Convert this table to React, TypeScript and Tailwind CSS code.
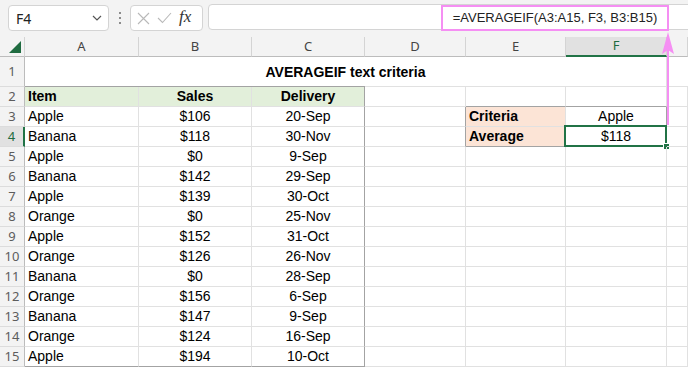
import React from 'react'

const rows: [string, string, string][] = [
  ['Apple', '$106', '20-Sep'],
  ['Banana', '$118', '30-Nov'],
  ['Apple', '$0', '9-Sep'],
  ['Banana', '$142', '29-Sep'],
  ['Apple', '$139', '30-Oct'],
  ['Orange', '$0', '25-Nov'],
  ['Apple', '$152', '31-Oct'],
  ['Orange', '$126', '26-Nov'],
  ['Banana', '$0', '28-Sep'],
  ['Orange', '$156', '6-Sep'],
  ['Banana', '$147', '9-Sep'],
  ['Orange', '$124', '16-Sep'],
  ['Apple', '$194', '10-Oct'],
]

const colWidths = ['w-[114px]', 'w-[113px]', 'w-[113px]', 'w-[101px]', 'w-[100px]', 'w-[101px]', 'flex-1']
const letters = ['A', 'B', 'C', 'D', 'E', 'F', '']

function darkRight(r: number, c: number) {
  return (c === 2 && r >= 2) || ((c === 3 || c === 5) && (r === 3 || r === 4))
}

function darkBottom(r: number, c: number) {
  return (r === 15 && c <= 2) || ((r === 2 || r === 4) && (c === 4 || c === 5))
}

function RowHeader({ n }: { n: number }) {
  const selected = n === 4
  return (
    <div
      className={`w-[25px] shrink-0 flex items-center justify-center border-b border-b-[#dcdcdc] font-['Noto_Sans',sans-serif] text-[13px] ${
        selected
          ? 'bg-[#e1e1e1] border-r-2 border-r-[#217346] text-[#1d6b3f]'
          : 'bg-[#f3f3f3] border-r border-r-[#bcbcbc] text-[#5c5c5c]'
      }`}
    >
      {n}
    </div>
  )
}

function Cell({
  r,
  c,
  children,
  className = '',
}: {
  r: number
  c: number
  children?: React.ReactNode
  className?: string
}) {
  const right = darkRight(r, c) ? 'border-r-[#a3a3a3]' : 'border-r-[#e1e1e1]'
  const bottom = darkBottom(r, c) ? 'border-b-[#a3a3a3]' : 'border-b-[#e1e1e1]'
  return (
    <div className={`${colWidths[c]} shrink-0 relative flex items-center border-r border-b ${right} ${bottom} ${className}`}>
      {children}
    </div>
  )
}

function FormulaBar() {
  return (
    <div className="h-[37px] bg-[#f3f3f3] flex items-start pt-[5px] pl-[8px] gap-[5px] overflow-hidden">
      {/* name box */}
      <div className="w-[101px] h-[26px] shrink-0 bg-white border border-[#d4d4d4] rounded-[4px] flex items-center justify-between pl-[7px] pr-[6px] font-['Noto_Sans',sans-serif] text-[14px] text-[#222]">
        <span>F4</span>
        <svg width="10" height="6" viewBox="0 0 10 6">
          <path d="M1 1 L5 5 L9 1" fill="none" stroke="#555" strokeWidth="1.2" />
        </svg>
      </div>
      <div className="w-[11px] h-[26px] shrink-0 flex flex-col items-center justify-center gap-[3px]">
        <span className="w-[2px] h-[2px] bg-[#8c8c8c]" />
        <span className="w-[2px] h-[2px] bg-[#8c8c8c]" />
        <span className="w-[2px] h-[2px] bg-[#8c8c8c]" />
      </div>
      {/* cancel / enter / insert function */}
      <div className="w-[73px] h-[26px] shrink-0 bg-white border border-[#d4d4d4] rounded-[4px] flex items-center pl-[6px] gap-[7px]">
        <svg width="13" height="13" viewBox="0 0 13 13">
          <path d="M1 1 L12 12 M12 1 L1 12" stroke="#b9b9b9" strokeWidth="1.1" />
        </svg>
        <svg width="15" height="12" viewBox="0 0 15 12">
          <path d="M1 6 L5.5 10.5 L14 1" fill="none" stroke="#b9b9b9" strokeWidth="1.1" />
        </svg>
        <span className="font-['Liberation_Serif',serif] italic text-[17px] text-[#333] leading-none -mt-[3px]">fx</span>
      </div>
      <div className="w-[492px] h-[26px] shrink-0 bg-white border border-[#d4d4d4] rounded-[4px] flex items-start justify-end pr-[30px] -mt-[1px]">
        <div className="w-[228px] h-[26px] border-2 border-[#f58ff3] flex items-center justify-center font-['Liberation_Sans',sans-serif] text-[13px] text-[#222]">
          =AVERAGEIF(A3:A15, F3, B3:B15)
        </div>
      </div>
    </div>
  )
}

function ColumnHeaders() {
  return (
    <div className="h-[20px] flex bg-[#f3f3f3] font-['Noto_Sans',sans-serif] text-[13px]">
      <div className="w-[25px] shrink-0 border-r border-r-[#d4d4d4] border-b border-b-[#bcbcbc] flex items-end justify-end pr-[3px] pb-[3px]">
        <svg width="12" height="12" viewBox="0 0 12 12">
          <polygon points="12,0 12,12 0,12" fill="#1f6b40" />
        </svg>
      </div>
      {letters.map((l, i) => (
        <div
          key={i}
          className={`${colWidths[i]} shrink-0 flex items-center justify-center border-r border-r-[#d4d4d4] ${
            l === 'F'
              ? 'bg-[#e1e1e1] border-b-2 border-b-[#217346] text-[#1d6b3f]'
              : 'border-b border-b-[#bcbcbc] text-[#444]'
          }`}
        >
          {l}
        </div>
      ))}
    </div>
  )
}

export default function App() {
  return (
    <div className="relative w-[688px] h-[367px] overflow-hidden bg-white font-['Liberation_Sans',Arial,sans-serif] text-[14px] text-black">
      <FormulaBar />
      <ColumnHeaders />

      {/* row 1: title merged across A:F */}
      <div className="h-[30px] flex">
        <RowHeader n={1} />
        <div className="w-[642px] shrink-0 flex flex-col border-r border-r-[#e1e1e1]">
          <div className="h-[29px] flex items-center justify-center font-bold pt-[2px]">AVERAGEIF text criteria</div>
          <div className="h-[1px] flex">
            <div className="w-[340px] bg-[#a3a3a3]" />
            <div className="flex-1 bg-[#e1e1e1]" />
          </div>
        </div>
        <div className="flex-1 border-b border-b-[#e1e1e1]" />
      </div>

      {/* row 2: table headings */}
      <div className="h-[20px] flex">
        <RowHeader n={2} />
        <Cell r={2} c={0} className="bg-[#e2efda] font-bold pl-[3px]">Item</Cell>
        <Cell r={2} c={1} className="bg-[#e2efda] font-bold justify-center">Sales</Cell>
        <Cell r={2} c={2} className="bg-[#e2efda] font-bold justify-center">Delivery</Cell>
        <Cell r={2} c={3} />
        <Cell r={2} c={4} />
        <Cell r={2} c={5} />
        <Cell r={2} c={6} />
      </div>

      {rows.map(([item, sales, date], i) => {
        const r = i + 3
        return (
          <div key={r} className="h-[20px] flex">
            <RowHeader n={r} />
            <Cell r={r} c={0} className="pl-[3px]">{item}</Cell>
            <Cell r={r} c={1} className="justify-center">{sales}</Cell>
            <Cell r={r} c={2} className="justify-center">{date}</Cell>
            <Cell r={r} c={3} />
            {r === 3 && (
              <>
                <Cell r={r} c={4} className="bg-[#fce4d6] font-bold pl-[3px]">Criteria</Cell>
                <Cell r={r} c={5} className="justify-center">Apple</Cell>
              </>
            )}
            {r === 4 && (
              <>
                <Cell r={r} c={4} className="bg-[#fce4d6] font-bold pl-[3px]">Average</Cell>
                <Cell r={r} c={5} className="justify-center">
                  $118
                  {/* active cell outline + fill handle */}
                  <div className="absolute -left-[2px] -top-[2px] -right-[1px] -bottom-[1px] border-2 border-[#217346]" />
                  <div className="absolute -right-[4px] -bottom-[4px] w-[7px] h-[7px] bg-[#217346] border border-white" />
                </Cell>
              </>
            )}
            {r > 4 && (
              <>
                <Cell r={r} c={4} />
                <Cell r={r} c={5} />
              </>
            )}
            <Cell r={r} c={6} />
          </div>
        )
      })}

      {/* callout arrow from F4 up to the formula */}
      <svg className="absolute left-0 top-0 pointer-events-none" width="688" height="367" viewBox="0 0 688 367">
        <line x1="668" y1="50" x2="668" y2="125" stroke="#f58ff3" strokeWidth="2" />
        <polygon points="668,32 662,54 668,50 674,54" fill="#f58ff3" />
      </svg>
    </div>
  )
}
